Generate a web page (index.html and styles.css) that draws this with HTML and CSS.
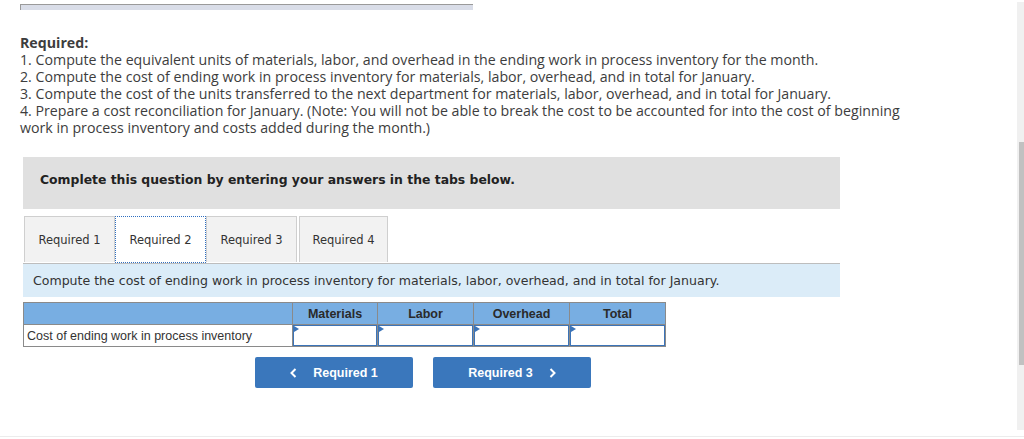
FILE: index.html
```html
<!DOCTYPE html>
<html>
<head>
<meta charset="utf-8">
<link rel="stylesheet" href="styles.css">
</head>
<body>
<div class="page">
  <div class="topbar"></div>
  <div class="required">
    <div class="req-title">Required:</div>
    <div>1. Compute the equivalent units of materials, labor, and overhead in the ending work in process inventory for the month.</div>
    <div>2. Compute the cost of ending work in process inventory for materials, labor, overhead, and in total for January.</div>
    <div>3. Compute the cost of the units transferred to the next department for materials, labor, overhead, and in total for January.</div>
    <div>4. Prepare a cost reconciliation for January. (Note: You will not be able to break the cost to be accounted for into the cost of beginning work in process inventory and costs added during the month.)</div>
  </div>
  <div class="panel">
    <div class="instructions">Complete this question by entering your answers in the tabs below.</div>
    <div class="tabs">
      <div class="tab">Required 1</div>
      <div class="tab active">Required 2</div>
      <div class="tab">Required 3</div>
      <div class="tab sep">Required 4</div>
    </div>
    <div class="info">Compute the cost of ending work in process inventory for materials, labor, overhead, and in total for January.</div>
    <table class="grid">
      <tr class="head">
        <th class="label-col"></th>
        <th class="c1">Materials</th>
        <th class="c2">Labor</th>
        <th class="c2">Overhead</th>
        <th class="c2">Total</th>
      </tr>
      <tr>
        <td class="label">Cost of ending work in process inventory</td>
        <td class="input"><span class="flag"></span></td>
        <td class="input"><span class="flag"></span></td>
        <td class="input"><span class="flag"></span></td>
        <td class="input"><span class="flag"></span></td>
      </tr>
    </table>
    <div class="nav">
      <div class="btn"><svg class="chev" width="7" height="10" viewBox="0 0 7 10"><polyline points="5.5,1 1.5,5 5.5,9" fill="none" stroke="#fff" stroke-width="2"/></svg>Required 1</div>
      <div class="btn">Required 3<svg class="chev right" width="7" height="10" viewBox="0 0 7 10"><polyline points="1.5,1 5.5,5 1.5,9" fill="none" stroke="#fff" stroke-width="2"/></svg></div>
    </div>
  </div>
</div>
<div class="scrollbar"><div class="thumb"></div></div>
<div class="bottomline"></div>
</body>
</html>
```
FILE: styles.css
```css
html, body {
  margin: 0;
  padding: 0;
  background: #fff;
}
body {
  width: 1024px;
  height: 439px;
  overflow: hidden;
  position: relative;
}
.page {
  padding: 4px 0 0 20px;
}
.topbar {
  width: 452px;
  height: 5px;
  background: #d9dde8;
  border-top: 1px solid #9a9a9a;
  border-left: 1px solid #9a9a9a;
}
.required {
  margin-top: 24px;
  width: 900px;
  font-family: "Open Sans", "Liberation Sans", sans-serif;
  font-size: 14.2px;
  line-height: 17px;
  color: #3d3d3d;
}
.req-title {
  font-weight: bold;
}
.panel {
  margin-top: 21px;
  margin-left: 3px;
  width: 817px;
}
.instructions {
  height: 52px;
  box-sizing: border-box;
  padding: 15px 0 0 17px;
  background: #e0e0e0;
  font-family: "DejaVu Sans", Verdana, sans-serif;
  font-weight: bold;
  font-size: 12.4px;
  color: #222;
}
.tabs {
  display: flex;
  margin-top: 7px;
  padding-left: 1px;
}
.tab {
  width: 91px;
  height: 46px;
  box-sizing: border-box;
  background: #f2f2f2;
  border: 1px solid #cfcfcf;
  border-bottom: none;
  font-family: "DejaVu Sans", Verdana, sans-serif;
  font-size: 11.5px;
  color: #333;
  display: flex;
  align-items: center;
  justify-content: center;
}
.tab.active {
  background: #fff;
  border: 1px dotted #2f6fc0;
  border-bottom: 1px dotted #2f6fc0;
  height: 47px;
}
.tab.sep {
  margin-left: 2px;
  width: 89px;
}
.info {
  height: 34px;
  box-sizing: border-box;
  border-top: 1px solid #bdbdbd;
  background: #dbecf8;
  padding: 9px 0 0 10px;
  font-family: "DejaVu Sans", Verdana, sans-serif;
  font-size: 12.55px;
  color: #333;
}
.grid {
  margin-top: 5px;
  border-collapse: collapse;
  font-family: "Liberation Sans", Arial, sans-serif;
  font-size: 12.5px;
}
.grid th {
  background: #78aee2;
  height: 21px;
  padding: 0;
  border: 1px solid #8a8a8a;
  font-weight: bold;
  color: #2a2a2a;
  text-align: center;
}
.grid .label-col { width: 268px; }
.grid .c1 { width: 84px; }
.grid .c2 { width: 95px; }
.grid td {
  height: 21px;
  padding: 0;
}
.grid td.label {
  border: 1px solid #8a8a8a;
  padding-left: 3px;
  color: #333;
  text-align: left;
}
.grid td.input {
  border: 1px solid #8a8a8a;
  box-shadow: inset 0 0 0 1px #3c74b8;
  position: relative;
  background: #fff;
}
.flag {
  position: absolute;
  left: 1px;
  top: 1px;
  width: 0;
  height: 0;
  border-top: 3px solid transparent;
  border-bottom: 3px solid transparent;
  border-left: 5px solid #3c74b8;
}
.nav {
  display: flex;
  gap: 20px;
  margin-top: 10px;
  margin-left: 232px;
}
.btn {
  width: 158px;
  height: 31px;
  background: #3a77bc;
  border-radius: 2px;
  color: #fff;
  font-family: "Liberation Sans", Arial, sans-serif;
  font-weight: bold;
  font-size: 12.5px;
  display: flex;
  align-items: center;
  justify-content: center;
}
.chev {
  margin-right: 16px;
}
.chev.right {
  margin-right: 0;
  margin-left: 16px;
}
.scrollbar {
  position: absolute;
  left: 1017px;
  top: 2px;
  width: 7px;
  height: 428px;
  background: #f0f0f0;
}
.thumb {
  position: absolute;
  left: 2px;
  top: 140px;
  width: 5px;
  height: 223px;
  background: #c1c1c1;
}
.bottomline {
  position: absolute;
  left: 0;
  top: 436px;
  width: 1024px;
  height: 1px;
  background: #ececec;
}
```
